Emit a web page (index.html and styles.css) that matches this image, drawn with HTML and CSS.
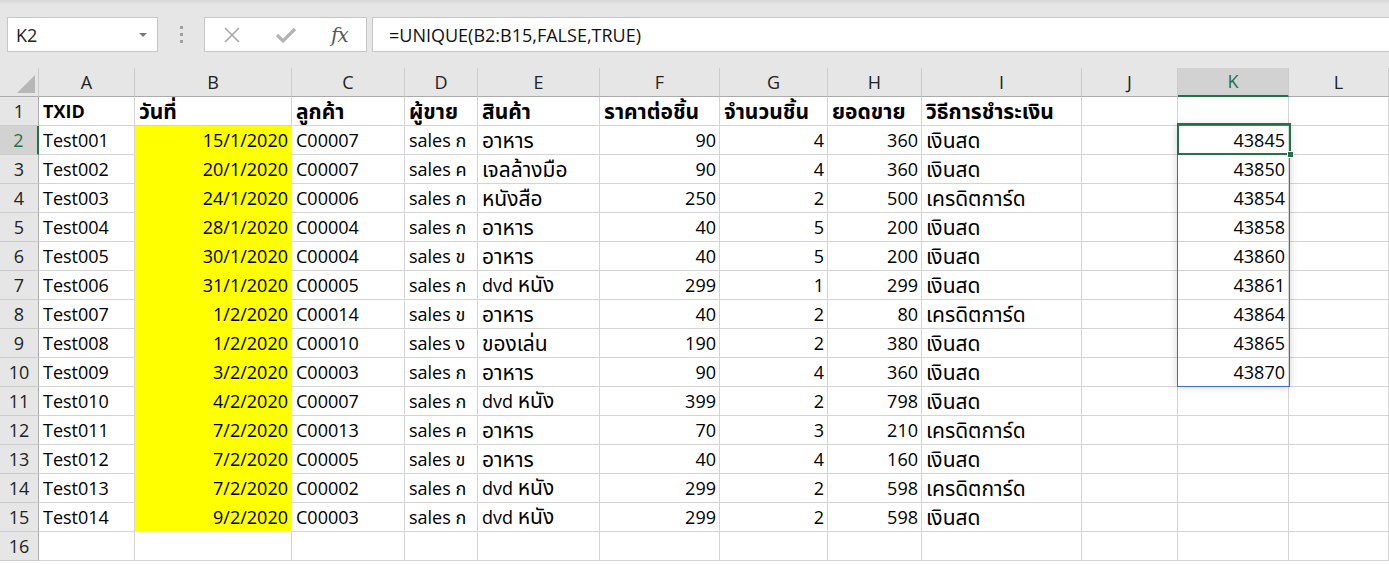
FILE: index.html
```html
<!DOCTYPE html>
<html lang="th">
<head>
<meta charset="utf-8">
<title>Sheet</title>
<link rel="stylesheet" href="styles.css">
</head>
<body>
<div class="app">
  <div class="topbar">
    <div class="namebox"><span>K2</span><span class="dd"></span></div>
    <div class="dots"><i></i><i></i><i></i></div>
    <div class="fxbox">
      <svg class="ic" width="20" height="20" viewBox="0 0 20 20"><path d="M3 3 L17 17 M17 3 L3 17" stroke="#a8a8a8" stroke-width="1.6" fill="none"/></svg>
      <svg class="ic" width="22" height="20" viewBox="0 0 22 20"><path d="M2 10 L8 16 L20 4" stroke="#b4b4b4" stroke-width="3.2" fill="none"/></svg>
      <span class="fx">fx</span>
    </div>
    <div class="formula">=UNIQUE(B2:B15,FALSE,TRUE)</div>
  </div>
  <div class="sheet">
    <table class="grid">
      <colgroup>
        <col style="width:39px"><col style="width:96px"><col style="width:157px"><col style="width:113px"><col style="width:73px"><col style="width:122px"><col style="width:120px"><col style="width:108px"><col style="width:94px"><col style="width:160px"><col style="width:96px"><col style="width:111px"><col style="width:100px">
      </colgroup>
      <thead>
        <tr class="hdr">
          <th class="corner"><span class="tri"></span></th>
          <th>A</th><th>B</th><th>C</th><th>D</th><th>E</th><th>F</th><th>G</th><th>H</th><th>I</th><th>J</th><th class="sel">K</th><th>L</th>
        </tr>
      </thead>
      <tbody>
        <tr class="b"><th>1</th><td>TXID</td><td class="t">วันที่</td><td class="t">ลูกค้า</td><td class="t">ผู้ขาย</td><td class="t">สินค้า</td><td class="t">ราคาต่อชิ้น</td><td class="t">จำนวนชิ้น</td><td class="t">ยอดขาย</td><td class="t">วิธีการชำระเงิน</td><td></td><td></td><td></td></tr>
        <tr><th class="rsel">2</th><td>Test001</td><td class="y n">15/1/2020</td><td>C00007</td><td>sales ก</td><td class="t">อาหาร</td><td class="n">90</td><td class="n">4</td><td class="n">360</td><td class="t">เงินสด</td><td></td><td class="n">43845</td><td></td></tr>
        <tr><th>3</th><td>Test002</td><td class="y n">20/1/2020</td><td>C00007</td><td>sales ค</td><td class="t">เจลล้างมือ</td><td class="n">90</td><td class="n">4</td><td class="n">360</td><td class="t">เงินสด</td><td></td><td class="n">43850</td><td></td></tr>
        <tr><th>4</th><td>Test003</td><td class="y n">24/1/2020</td><td>C00006</td><td>sales ก</td><td class="t">หนังสือ</td><td class="n">250</td><td class="n">2</td><td class="n">500</td><td class="t">เครดิตการ์ด</td><td></td><td class="n">43854</td><td></td></tr>
        <tr><th>5</th><td>Test004</td><td class="y n">28/1/2020</td><td>C00004</td><td>sales ก</td><td class="t">อาหาร</td><td class="n">40</td><td class="n">5</td><td class="n">200</td><td class="t">เงินสด</td><td></td><td class="n">43858</td><td></td></tr>
        <tr><th>6</th><td>Test005</td><td class="y n">30/1/2020</td><td>C00004</td><td>sales ข</td><td class="t">อาหาร</td><td class="n">40</td><td class="n">5</td><td class="n">200</td><td class="t">เงินสด</td><td></td><td class="n">43860</td><td></td></tr>
        <tr><th>7</th><td>Test006</td><td class="y n">31/1/2020</td><td>C00005</td><td>sales ก</td><td>dvd <span class="t">หนัง</span></td><td class="n">299</td><td class="n">1</td><td class="n">299</td><td class="t">เงินสด</td><td></td><td class="n">43861</td><td></td></tr>
        <tr><th>8</th><td>Test007</td><td class="y n">1/2/2020</td><td>C00014</td><td>sales ข</td><td class="t">อาหาร</td><td class="n">40</td><td class="n">2</td><td class="n">80</td><td class="t">เครดิตการ์ด</td><td></td><td class="n">43864</td><td></td></tr>
        <tr><th>9</th><td>Test008</td><td class="y n">1/2/2020</td><td>C00010</td><td>sales ง</td><td class="t">ของเล่น</td><td class="n">190</td><td class="n">2</td><td class="n">380</td><td class="t">เงินสด</td><td></td><td class="n">43865</td><td></td></tr>
        <tr><th>10</th><td>Test009</td><td class="y n">3/2/2020</td><td>C00003</td><td>sales ก</td><td class="t">อาหาร</td><td class="n">90</td><td class="n">4</td><td class="n">360</td><td class="t">เงินสด</td><td></td><td class="n">43870</td><td></td></tr>
        <tr><th>11</th><td>Test010</td><td class="y n">4/2/2020</td><td>C00007</td><td>sales ก</td><td>dvd <span class="t">หนัง</span></td><td class="n">399</td><td class="n">2</td><td class="n">798</td><td class="t">เงินสด</td><td></td><td></td><td></td></tr>
        <tr><th>12</th><td>Test011</td><td class="y n">7/2/2020</td><td>C00013</td><td>sales ค</td><td class="t">อาหาร</td><td class="n">70</td><td class="n">3</td><td class="n">210</td><td class="t">เครดิตการ์ด</td><td></td><td></td><td></td></tr>
        <tr><th>13</th><td>Test012</td><td class="y n">7/2/2020</td><td>C00005</td><td>sales ข</td><td class="t">อาหาร</td><td class="n">40</td><td class="n">4</td><td class="n">160</td><td class="t">เงินสด</td><td></td><td></td><td></td></tr>
        <tr><th>14</th><td>Test013</td><td class="y n">7/2/2020</td><td>C00002</td><td>sales ก</td><td>dvd <span class="t">หนัง</span></td><td class="n">299</td><td class="n">2</td><td class="n">598</td><td class="t">เครดิตการ์ด</td><td></td><td></td><td></td></tr>
        <tr><th>15</th><td>Test014</td><td class="y n">9/2/2020</td><td>C00003</td><td>sales ก</td><td>dvd <span class="t">หนัง</span></td><td class="n">299</td><td class="n">2</td><td class="n">598</td><td class="t">เงินสด</td><td></td><td></td><td></td></tr>
        <tr><th>16</th><td></td><td></td><td></td><td></td><td></td><td></td><td></td><td></td><td></td><td></td><td></td><td></td></tr>
      </tbody>
    </table>
    <div class="spill"></div>
    <div class="active"><span class="handle"></span></div>
  </div>
</div>
</body>
</html>
```

FILE: styles.css
```css
* { box-sizing: border-box; }
html, body { margin: 0; padding: 0; }
body {
  width: 1389px;
  height: 564px;
  overflow: hidden;
  background: #ffffff;
  font-family: "Open Sans", "Noto Sans Thai", "Noto Sans Thai UI", "Loma", "Garuda", "Tlwg Typo", "Noto Sans", sans-serif;
  font-size: 18px;
  color: #000;
}
.app { width: 1389px; }

.topbar {
  height: 68px;
  display: flex;
  align-items: flex-start;
  padding-top: 17px;
  padding-left: 7px;
  background: linear-gradient(#d8d8d8 0px, #e6e6e6 5px, #e6e6e6 100%);
}
.namebox {
  width: 151px;
  height: 35px;
  background: #fff;
  border: 1px solid #c6c6c6;
  display: flex;
  align-items: center;
  justify-content: space-between;
  padding: 0 10px 0 8px;
  color: #222;
}
.dd {
  width: 0; height: 0;
  border-left: 4px solid transparent;
  border-right: 4px solid transparent;
  border-top: 4px solid #7a7a7a;
}
.dots {
  width: 46px;
  height: 35px;
  display: flex;
  flex-direction: column;
  align-items: center;
  justify-content: center;
  gap: 4px;
}
.dots i {
  display: block;
  width: 3px;
  height: 3px;
  background: #a0a0a0;
}
.fxbox {
  width: 163px;
  height: 35px;
  background: #fff;
  border: 1px solid #c6c6c6;
  display: flex;
  align-items: center;
  padding-left: 17px;
  gap: 33px;
}
.fxbox .ic { display: block; }
.fx {
  font-family: "DejaVu Serif", "Liberation Serif", serif;
  font-style: italic;
  font-size: 20px;
  color: #595959;
  margin-left: 1px;
  letter-spacing: -1px;
}
.formula {
  margin-left: 5px;
  flex: 1;
  height: 35px;
  background: #fff;
  border: 1px solid #c6c6c6;
  border-right: none;
  padding-left: 16px;
  display: flex;
  align-items: center;
  color: #111;
}

.sheet { position: relative; }
.grid {
  table-layout: fixed;
  border-collapse: separate;
  border-spacing: 0;
  width: 1389px;
}
.grid th, .grid td {
  white-space: nowrap;
  overflow: hidden;
  font-weight: normal;
}
.grid .hdr th {
  padding: 0;
  height: 28px;
  background: #e6e6e6;
  border-right: 1px solid #cbcbcb;
  border-bottom: 1px solid #ababab;
  text-align: center;
  color: #222;
  font-size: 18px;
  line-height: 27px;
}
.grid .hdr th.sel {
  background: #d2d2d2;
  color: #217346;
  border-bottom: 2px solid #217346;
}
.corner { position: relative; }
.tri {
  position: absolute;
  right: 3px;
  bottom: 3px;
  width: 0; height: 0;
  border-left: 18px solid transparent;
  border-bottom: 18px solid #b7b7b7;
}
.grid tbody th {
  padding: 0;
  height: 29px;
  background: #e6e6e6;
  border-right: 1px solid #ababab;
  border-bottom: 1px solid #cbcbcb;
  text-align: center;
  color: #222;
  line-height: 28px;
}
.grid tbody th.rsel {
  background: #d2d2d2;
  color: #217346;
  border-right: 2px solid #217346;
}
.grid tbody td {
  height: 29px;
  border-right: 1px solid #d4d4d4;
  border-bottom: 1px solid #d4d4d4;
  padding: 0 3px 0 4px;
  line-height: 28px;
}
.grid tbody td.n { text-align: right; }
.grid tbody td.y {
  background: #ffff00;
  border-right-color: #ffff00;
  border-bottom-color: #ffff00;
}
.grid tbody td.t { font-size: 21px; }
.grid tbody td span.t { font-size: 21px; line-height: 18px; }
.grid tr.b td { font-weight: bold; padding-left: 4px; }

.spill {
  position: absolute;
  left: 1177px;
  top: 57px;
  width: 113px;
  height: 262px;
  border: 1px solid #3d6fc6;
  box-shadow: 0 0 8px rgba(0,0,0,0.18);
  pointer-events: none;
}
.active {
  position: absolute;
  left: 1177px;
  top: 55px;
  width: 114px;
  height: 32px;
  border: 2px solid #217346;
}
.handle {
  position: absolute;
  right: -5px;
  bottom: -5px;
  width: 7px;
  height: 7px;
  background: #217346;
  border: 1px solid #fff;
}
```
